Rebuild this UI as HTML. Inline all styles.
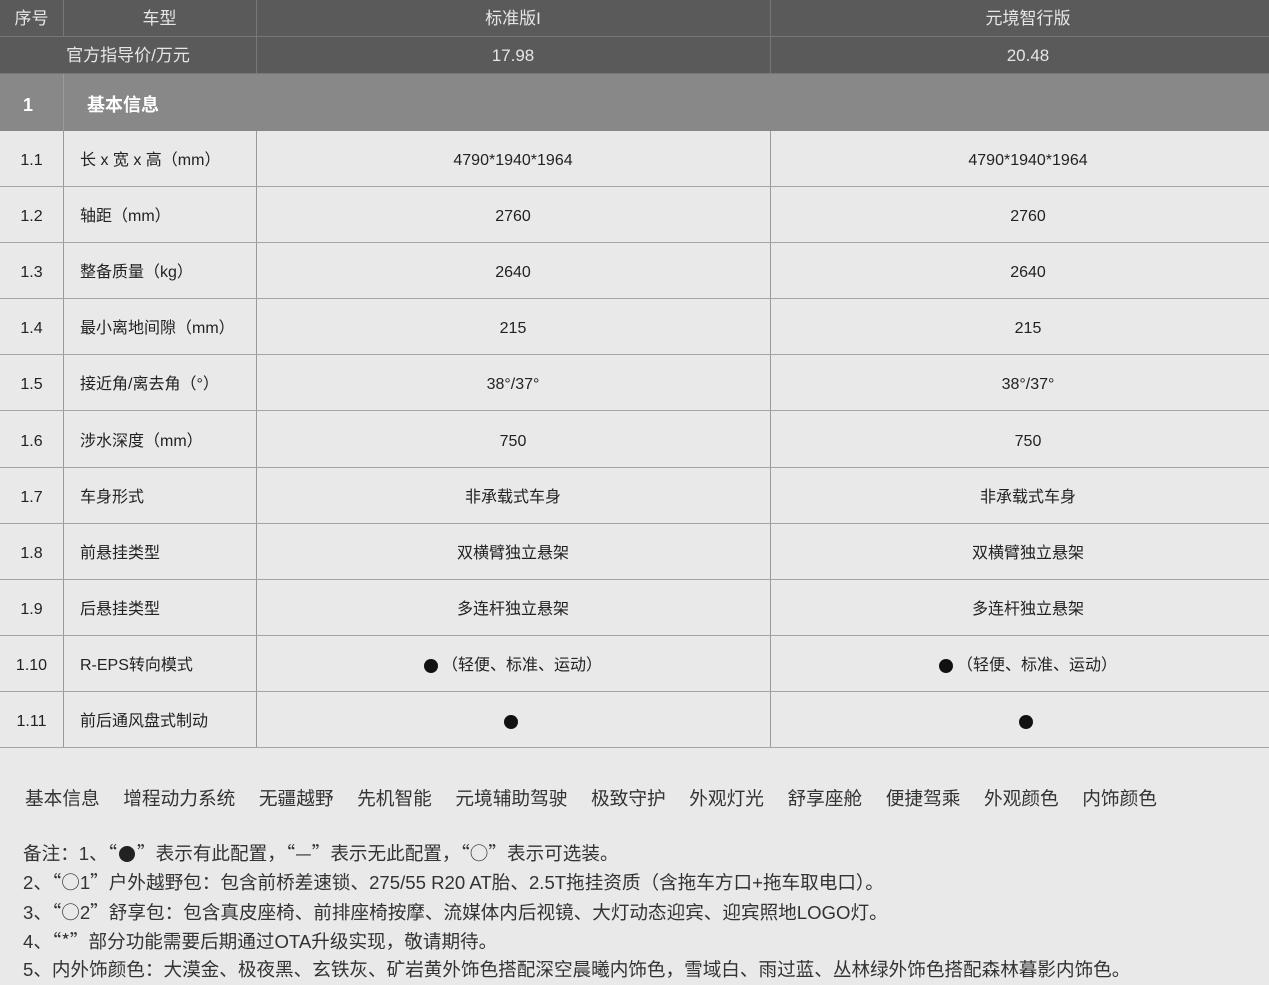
<!DOCTYPE html>
<html><head><meta charset="utf-8"><style>
*{margin:0;padding:0;box-sizing:border-box}
body{width:1269px;height:985px;background:#e9e9e9;font-family:"Liberation Sans","Noto Sans CJK SC",sans-serif;position:relative;overflow:hidden;color:#222}
.c{position:absolute;display:flex;align-items:center;justify-content:center;font-size:16px;line-height:20px}
.h{background:#5a5a5a;color:#e6e6e6;font-size:17px}
.vl{position:absolute;width:1px}
.hl{position:absolute;height:1px;left:0;width:1269px}
.l{justify-content:flex-start;padding-left:17px}
.dot{display:inline-block;width:14px;height:14px;border-radius:50%;background:#111;margin-right:4px}
.nav{position:absolute;top:787px;left:25px;font-size:18.7px;color:#333;line-height:24px;white-space:nowrap}
.nav span{margin-right:23.5px}
.note{position:absolute;left:23px;font-size:18.6px;color:#333;white-space:nowrap;line-height:24px}
.q{font-family:"Noto Sans CJK SC",sans-serif}
.bd{display:inline-block;width:16px;height:16px;border-radius:50%;background:#222;vertical-align:-2px;margin:0 2px}
</style></head><body>
<div class="c h" style="left:0;top:0;width:1269px;height:74px"></div>
<div class="c h" style="left:0;top:0;width:63px;height:37px">序号</div>
<div class="c h" style="left:63px;top:0;width:193px;height:37px">车型</div>
<div class="c h" style="left:256px;top:0;width:514px;height:37px">标准版I</div>
<div class="c h" style="left:770px;top:0;width:516px;height:37px">元境智行版</div>
<div class="c h" style="left:0;top:37px;width:256px;height:37px">官方指导价/万元</div>
<div class="c h" style="left:256px;top:37px;width:514px;height:37px">17.98</div>
<div class="c h" style="left:770px;top:37px;width:516px;height:37px">20.48</div>
<div class="hl" style="top:36px;background:#777"></div>
<div class="hl" style="top:73px;background:#777"></div>
<div class="vl" style="left:63px;top:0;height:37px;background:#777"></div>
<div class="vl" style="left:256px;top:0;height:74px;background:#777"></div>
<div class="vl" style="left:770px;top:0;height:74px;background:#777"></div>
<div style="position:absolute;left:0;top:74px;width:1269px;height:57px;background:#888"></div>
<div class="c" style="left:0;top:76px;width:56px;height:57px;color:#fff;font-weight:bold;font-size:18px">1</div>
<div class="c l" style="left:63px;top:76px;width:200px;height:57px;color:#fff;font-weight:bold;font-size:18px;padding-left:24px">基本信息</div>
<div class="vl" style="left:63px;top:74px;height:674px;background:#9a9a9a"></div>
<div class="vl" style="left:256px;top:131px;height:617px;background:#9a9a9a"></div>
<div class="vl" style="left:770px;top:131px;height:617px;background:#9a9a9a"></div>
<div id="rows"></div>
<script>
var d=[["1.1","长 x 宽 x 高（mm）","4790*1940*1964"],["1.2","轴距（mm）","2760"],["1.3","整备质量（kg）","2640"],["1.4","最小离地间隙（mm）","215"],["1.5","接近角/离去角（°）","38°/37°"],["1.6","涉水深度（mm）","750"],["1.7","车身形式","非承载式车身"],["1.8","前悬挂类型","双横臂独立悬架"],["1.9","后悬挂类型","多连杆独立悬架"],["1.10","R-EPS转向模式","<i class='dot'></i>（轻便、标准、运动）"],["1.11","前后通风盘式制动","<i class='dot'></i>"]];
var h="";d.forEach(function(r,i){var t=131+i*56.1,u=t+2;
h+='<div class="c" style="left:0;top:'+u+'px;width:63px;height:56px">'+r[0]+'</div>';
h+='<div class="c l" style="left:63px;top:'+u+'px;width:193px;height:56px">'+r[1]+'</div>';
h+='<div class="c" style="left:256px;top:'+u+'px;width:514px;height:56px">'+r[2]+'</div>';
h+='<div class="c" style="left:770px;top:'+u+'px;width:516px;height:56px">'+r[2]+'</div>';
h+='<div class="hl" style="top:'+(t+55)+'px;background:#a5a5a5"></div>';});
document.getElementById("rows").innerHTML=h;
</script>
<div class="nav"><span>基本信息</span><span>增程动力系统</span><span>无疆越野</span><span>先机智能</span><span>元境辅助驾驶</span><span>极致守护</span><span>外观灯光</span><span>舒享座舱</span><span>便捷驾乘</span><span>外观颜色</span><span>内饰颜色</span></div>
<div class="note" style="top:841px">备注：1、<span class="q">“</span><i class="bd"></i><span class="q">”</span>表示有此配置，<span class="q">“—”</span>表示无此配置，<span class="q">“○”</span>表示可选装。</div>
<div class="note" style="top:870px">2、<span class="q">“○</span>1<span class="q">”</span>户外越野包：包含前桥差速锁、275/55 R20 AT胎、2.5T拖挂资质（含拖车方口+拖车取电口）。</div>
<div class="note" style="top:900px">3、<span class="q">“○</span>2<span class="q">”</span>舒享包：包含真皮座椅、前排座椅按摩、流媒体内后视镜、大灯动态迎宾、迎宾照地LOGO灯。</div>
<div class="note" style="top:929px">4、<span class="q">“*”</span>部分功能需要后期通过OTA升级实现，敬请期待。</div>
<div class="note" style="top:958px">5、内外饰颜色：大漠金、极夜黑、玄铁灰、矿岩黄外饰色搭配深空晨曦内饰色，雪域白、雨过蓝、丛林绿外饰色搭配森林暮影内饰色。</div>
</body></html>
